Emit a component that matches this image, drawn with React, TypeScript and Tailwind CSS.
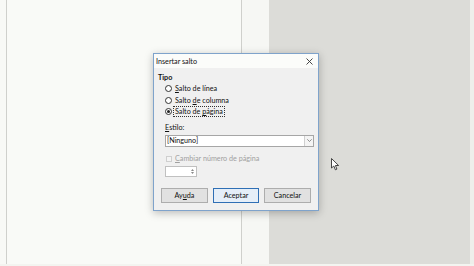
import React from "react";

const U = ({ children }: { children: React.ReactNode }) => (
  <span className="underline underline-offset-1">{children}</span>
);

function Radio({ checked, children, focus }: { checked?: boolean; children: React.ReactNode; focus?: boolean }) {
  return (
    <div className="flex items-center h-[11.5px] pl-[7px]">
      <div className="w-[7px] h-[7px] rounded-full border border-[#333] bg-white flex items-center justify-center">
        {checked && <div className="w-[3px] h-[3px] rounded-full bg-[#222]" />}
      </div>
      <span className={"ml-[2px] leading-[9px] px-[1px] " + (focus ? "outline outline-1 outline-dotted outline-[#333]" : "")}>
        {children}
      </span>
    </div>
  );
}

export default function App() {
  return (
    <div
      className="relative w-[474px] h-[266px] overflow-hidden bg-[#f8f9f6] text-[#111]"
      style={{ fontFamily: 'Lato, "Noto Sans", sans-serif' }}
    >
      <div className="flex h-[264px]">
        <div className="w-[6px] bg-[#f8f9f6]" />
        <div className="w-[1px] bg-[#cfd0cc]" />
        <div className="w-[234px] bg-[#f9faf7]" />
        <div className="w-[1px] bg-[#cfd0cc]" />
        <div className="w-[27px] bg-[#f6f7f4]" />
        <div className="w-[201px] bg-[#dcdcd8]" />
        <div className="flex-1 bg-[#eeefeb]" />
      </div>
      <div className="h-[2px] bg-[#f3f4f0]" />

      {/* Dialog */}
      <div className="absolute left-[153px] top-[53px] w-[166px] h-[158px] border border-[#7fa3cb] bg-[#f0f0f0] shadow-[0_2px_8px_rgba(0,0,0,0.25)] flex flex-col text-[7.2px]">
        <div className="h-[14px] bg-[#fbfcfa] flex items-center justify-between pl-[2px] pr-[5px]">
          <span className="leading-[9px]">Insertar salto</span>
          <svg width="7" height="7" viewBox="0 0 7 7">
            <path d="M0.5 0.5 L6.5 6.5 M6.5 0.5 L0.5 6.5" stroke="#333" strokeWidth="0.9" />
          </svg>
        </div>
        <div className="flex-1 flex flex-col pl-[4px] pr-[4px]">
          <div className="h-[10px] mt-[4px] flex items-center font-bold leading-[9px]">Tipo</div>
          <div className="mt-[1px] flex flex-col">
            <Radio><U>S</U>alto de línea</Radio>
            <Radio>Salto <U>d</U>e columna</Radio>
            <Radio checked focus>Salto de <U>p</U>ágina</Radio>
          </div>
          <div className="h-[10px] mt-[5px] pl-[7px] flex items-center leading-[9px]"><U>E</U>stilo:</div>
          <div className="mt-[2px] ml-[7px] h-[12px] bg-white border border-[#a6a6a6] flex items-stretch">
            <span className="flex-1 pl-[1px] leading-[10px]">[Ninguno]</span>
            <div className="w-[9px] border-l border-[#d0d0d0] bg-[#f4f4f4] flex items-center justify-center">
              <svg width="5" height="3" viewBox="0 0 5 3">
                <path d="M0.3 0.3 L2.5 2.5 L4.7 0.3" stroke="#666" strokeWidth="0.7" fill="none" />
              </svg>
            </div>
          </div>
          <div className="h-[10px] mt-[7px] pl-[8px] flex items-center text-[#a0a0a0]">
            <div className="w-[6px] h-[6px] border border-[#cfcfcf] bg-[#f4f4f4]" />
            <span className="ml-[3px] leading-[9px]"><U>C</U>ambiar número de página</span>
          </div>
          <div className="mt-[2px] ml-[7px] w-[32px] h-[11px] bg-white border border-[#c0c0c0] flex">
            <div className="flex-1" />
            <div className="w-[7px] flex flex-col items-center justify-center gap-[1px]">
              <svg width="3" height="2" viewBox="0 0 3 2"><path d="M0 2 L1.5 0 L3 2Z" fill="#888" /></svg>
              <svg width="3" height="2" viewBox="0 0 3 2"><path d="M0 0 L1.5 2 L3 0Z" fill="#888" /></svg>
            </div>
          </div>
          <div className="mt-[11px] h-[15px] flex pl-[3px] gap-[5px]">
            <div className="w-[47px] h-[15px] bg-[#e1e1e1] border border-[#adadad] flex items-center justify-center leading-[9px]">Ay<U>u</U>da</div>
            <div className="w-[46px] h-[15px] bg-[#e5eef8] border-[1.5px] border-[#2f6fb5] flex items-center justify-center leading-[9px]">Aceptar</div>
            <div className="w-[47px] h-[15px] bg-[#e1e1e1] border border-[#adadad] flex items-center justify-center leading-[9px]">Cancelar</div>
          </div>
        </div>
      </div>

      {/* Cursor */}
      <svg className="absolute left-[331px] top-[158px]" width="9" height="13" viewBox="0 0 9 13">
        <path d="M0.5 0.5 L0.5 10 L2.8 8 L4.4 11.8 L5.9 11.1 L4.4 7.5 L7.6 7.5 Z" fill="#fff" stroke="#333" strokeWidth="0.9" strokeLinejoin="round" />
      </svg>
    </div>
  );
}
